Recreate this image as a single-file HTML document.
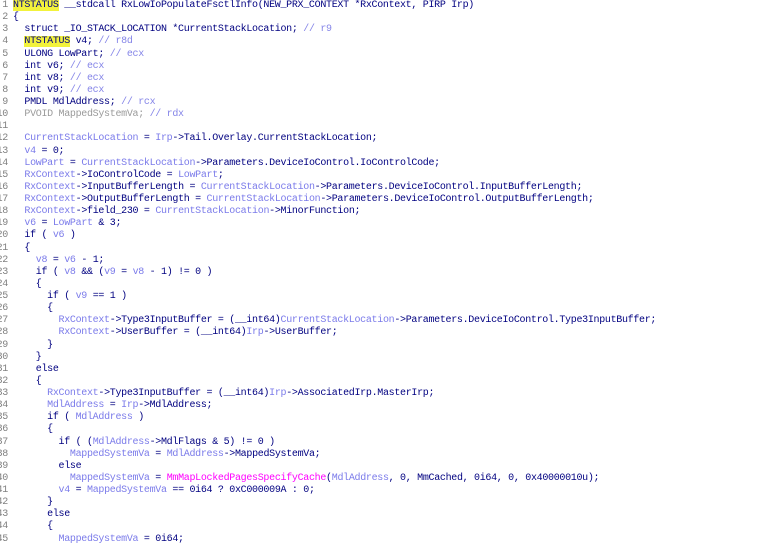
<!DOCTYPE html>
<html><head><meta charset="utf-8"><style>
html,body{margin:0;padding:0;background:#fff;width:768px;height:541px;overflow:hidden}
.ln{position:absolute;left:0;width:8px;text-align:right;direction:rtl;color:#808080;overflow:hidden;white-space:nowrap}
.code{position:absolute;left:13px;white-space:pre;color:#000080}
.row{height:12.14px;line-height:12.14px;font-family:"Liberation Mono",monospace;font-size:10px;letter-spacing:-0.31px;position:relative}
.v{color:#7b7bea}.c{color:#8585e8}.g{color:#9a9a9a}.f{color:#ff00ff}
.hl{background:#f2f23c}
</style></head><body>
<div style="position:absolute;top:0;left:0">
<div class="row"><span class="ln">1</span><span class="code"><span class="hl">NTSTATUS</span> __stdcall RxLowIoPopulateFsctlInfo(NEW_PRX_CONTEXT *RxContext, PIRP Irp)</span></div>
<div class="row"><span class="ln">2</span><span class="code">{</span></div>
<div class="row"><span class="ln">3</span><span class="code">  struct _IO_STACK_LOCATION *CurrentStackLocation; <span class="c">// r9</span></span></div>
<div class="row"><span class="ln">4</span><span class="code">  <span class="hl">NTSTATUS</span> v4; <span class="c">// r8d</span></span></div>
<div class="row"><span class="ln">5</span><span class="code">  ULONG LowPart; <span class="c">// ecx</span></span></div>
<div class="row"><span class="ln">6</span><span class="code">  int v6; <span class="c">// ecx</span></span></div>
<div class="row"><span class="ln">7</span><span class="code">  int v8; <span class="c">// ecx</span></span></div>
<div class="row"><span class="ln">8</span><span class="code">  int v9; <span class="c">// ecx</span></span></div>
<div class="row"><span class="ln">9</span><span class="code">  PMDL MdlAddress; <span class="c">// rcx</span></span></div>
<div class="row"><span class="ln">10</span><span class="code"><span class="g">  PVOID MappedSystemVa; </span><span class="c">// rdx</span></span></div>
<div class="row"><span class="ln">11</span><span class="code"></span></div>
<div class="row"><span class="ln">12</span><span class="code">  <span class="v">CurrentStackLocation</span> = <span class="v">Irp</span>-&gt;Tail.Overlay.CurrentStackLocation;</span></div>
<div class="row"><span class="ln">13</span><span class="code">  <span class="v">v4</span> = 0;</span></div>
<div class="row"><span class="ln">14</span><span class="code">  <span class="v">LowPart</span> = <span class="v">CurrentStackLocation</span>-&gt;Parameters.DeviceIoControl.IoControlCode;</span></div>
<div class="row"><span class="ln">15</span><span class="code">  <span class="v">RxContext</span>-&gt;IoControlCode = <span class="v">LowPart</span>;</span></div>
<div class="row"><span class="ln">16</span><span class="code">  <span class="v">RxContext</span>-&gt;InputBufferLength = <span class="v">CurrentStackLocation</span>-&gt;Parameters.DeviceIoControl.InputBufferLength;</span></div>
<div class="row"><span class="ln">17</span><span class="code">  <span class="v">RxContext</span>-&gt;OutputBufferLength = <span class="v">CurrentStackLocation</span>-&gt;Parameters.DeviceIoControl.OutputBufferLength;</span></div>
<div class="row"><span class="ln">18</span><span class="code">  <span class="v">RxContext</span>-&gt;field_230 = <span class="v">CurrentStackLocation</span>-&gt;MinorFunction;</span></div>
<div class="row"><span class="ln">19</span><span class="code">  <span class="v">v6</span> = <span class="v">LowPart</span> &amp; 3;</span></div>
<div class="row"><span class="ln">20</span><span class="code">  if ( <span class="v">v6</span> )</span></div>
<div class="row"><span class="ln">21</span><span class="code">  {</span></div>
<div class="row"><span class="ln">22</span><span class="code">    <span class="v">v8</span> = <span class="v">v6</span> - 1;</span></div>
<div class="row"><span class="ln">23</span><span class="code">    if ( <span class="v">v8</span> &amp;&amp; (<span class="v">v9</span> = <span class="v">v8</span> - 1) != 0 )</span></div>
<div class="row"><span class="ln">24</span><span class="code">    {</span></div>
<div class="row"><span class="ln">25</span><span class="code">      if ( <span class="v">v9</span> == 1 )</span></div>
<div class="row"><span class="ln">26</span><span class="code">      {</span></div>
<div class="row"><span class="ln">27</span><span class="code">        <span class="v">RxContext</span>-&gt;Type3InputBuffer = (__int64)<span class="v">CurrentStackLocation</span>-&gt;Parameters.DeviceIoControl.Type3InputBuffer;</span></div>
<div class="row"><span class="ln">28</span><span class="code">        <span class="v">RxContext</span>-&gt;UserBuffer = (__int64)<span class="v">Irp</span>-&gt;UserBuffer;</span></div>
<div class="row"><span class="ln">29</span><span class="code">      }</span></div>
<div class="row"><span class="ln">30</span><span class="code">    }</span></div>
<div class="row"><span class="ln">31</span><span class="code">    else</span></div>
<div class="row"><span class="ln">32</span><span class="code">    {</span></div>
<div class="row"><span class="ln">33</span><span class="code">      <span class="v">RxContext</span>-&gt;Type3InputBuffer = (__int64)<span class="v">Irp</span>-&gt;AssociatedIrp.MasterIrp;</span></div>
<div class="row"><span class="ln">34</span><span class="code">      <span class="v">MdlAddress</span> = <span class="v">Irp</span>-&gt;MdlAddress;</span></div>
<div class="row"><span class="ln">35</span><span class="code">      if ( <span class="v">MdlAddress</span> )</span></div>
<div class="row"><span class="ln">36</span><span class="code">      {</span></div>
<div class="row"><span class="ln">37</span><span class="code">        if ( (<span class="v">MdlAddress</span>-&gt;MdlFlags &amp; 5) != 0 )</span></div>
<div class="row"><span class="ln">38</span><span class="code">          <span class="v">MappedSystemVa</span> = <span class="v">MdlAddress</span>-&gt;MappedSystemVa;</span></div>
<div class="row"><span class="ln">39</span><span class="code">        else</span></div>
<div class="row"><span class="ln">40</span><span class="code">          <span class="v">MappedSystemVa</span> = <span class="f">MmMapLockedPagesSpecifyCache</span>(<span class="v">MdlAddress</span>, 0, MmCached, 0i64, 0, 0x40000010u);</span></div>
<div class="row"><span class="ln">41</span><span class="code">        <span class="v">v4</span> = <span class="v">MappedSystemVa</span> == 0i64 ? 0xC000009A : 0;</span></div>
<div class="row"><span class="ln">42</span><span class="code">      }</span></div>
<div class="row"><span class="ln">43</span><span class="code">      else</span></div>
<div class="row"><span class="ln">44</span><span class="code">      {</span></div>
<div class="row"><span class="ln">45</span><span class="code">        <span class="v">MappedSystemVa</span> = 0i64;</span></div>
</div>
</body></html>
